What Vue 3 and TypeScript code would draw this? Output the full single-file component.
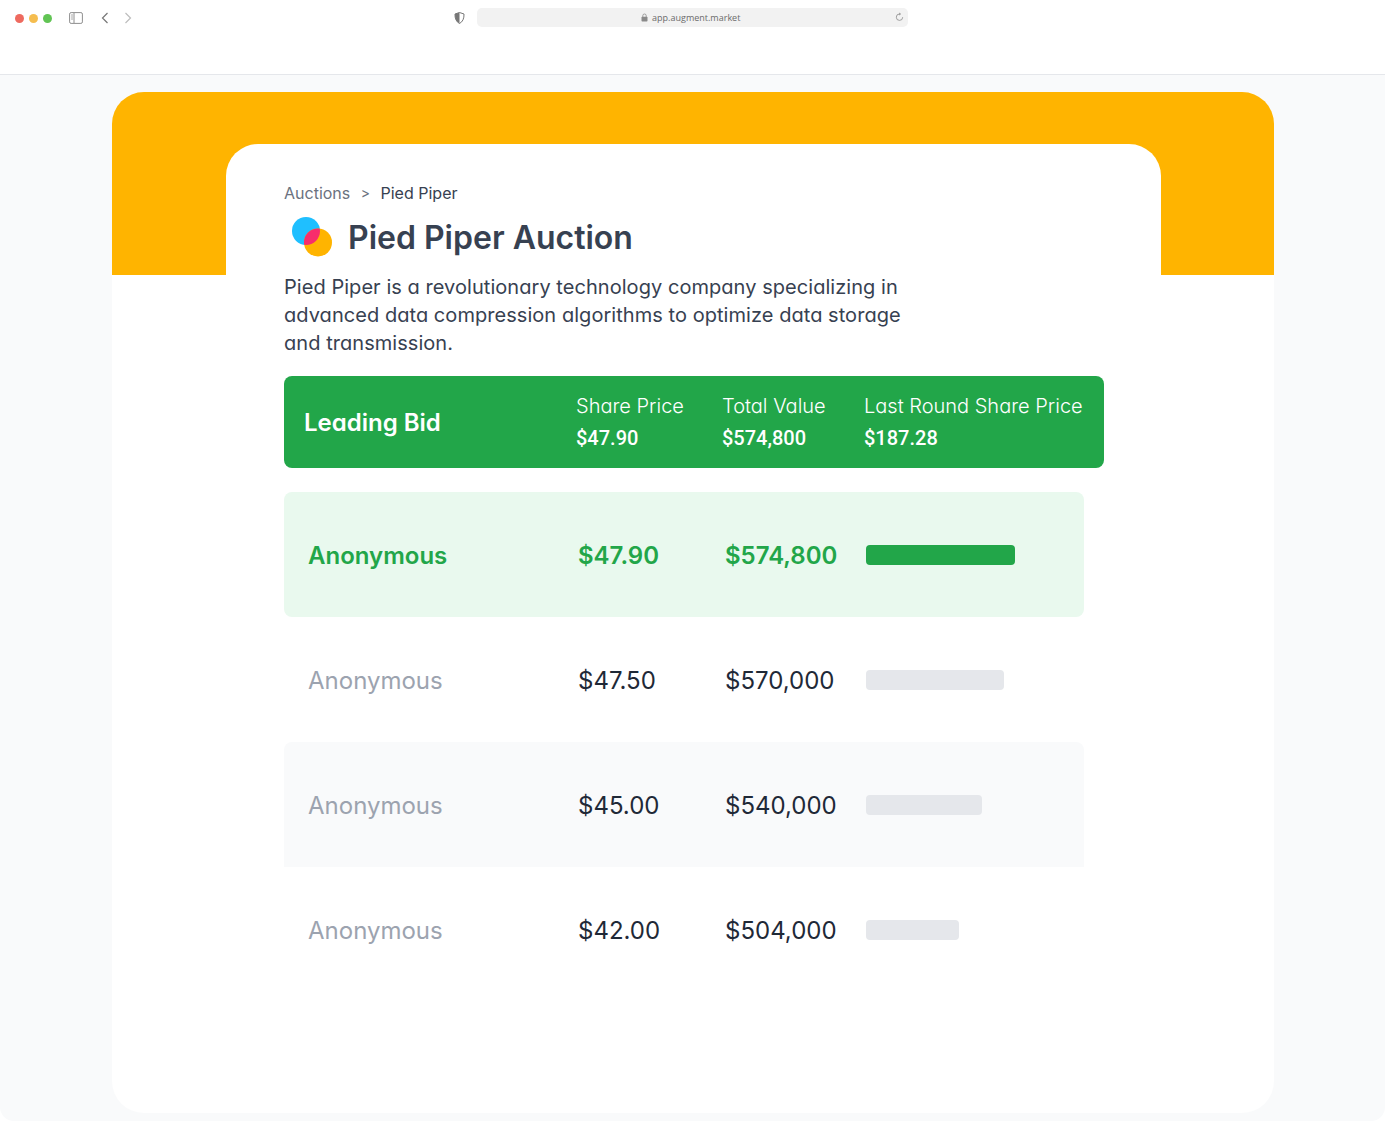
<template>
  <div class="window">
    <header class="chrome">
      <div class="chrome-left">
        <div class="lights">
          <span class="light red"></span>
          <span class="light yellow"></span>
          <span class="light green"></span>
        </div>
        <svg class="sidebar-icon" width="14" height="12" viewBox="0 0 14 12" fill="none">
          <rect x="0.6" y="0.6" width="12.8" height="10.8" rx="1.5" stroke="#8e8e8e" />
          <path d="M5 1v10" stroke="#8e8e8e" />
          <path d="M2 3h2M2 5h2M2 7h2" stroke="#a8a8a8" />
        </svg>
        <svg class="nav-back" width="8" height="12" viewBox="0 0 8 12" fill="none">
          <path d="M6.5 1 1.5 6l5 5" stroke="#777" stroke-width="1.2" />
        </svg>
        <svg class="nav-forward" width="8" height="12" viewBox="0 0 8 12" fill="none">
          <path d="M1.5 1l5 5-5 5" stroke="#bdbdbd" stroke-width="1.2" />
        </svg>
      </div>
      <svg class="shield" width="11" height="12" viewBox="0 0 11 12">
        <path d="M5.5.5 10 2c.2 4.500-1.300 7.800-4.500 9.500C2.300 9.800.8 6.500 1 2z" fill="#fff" stroke="#777" />
        <path d="M5.500.5 1 2c-.2 4.500 1.300 7.800 4.500 9.500z" fill="#777" />
      </svg>
      <div class="address">
        <svg width="7" height="9" viewBox="0 0 7 9" fill="none">
          <path d="M1.800 4V2.700a1.700 1.700 0 0 1 3.400 0V4" stroke="#8a8a8a" stroke-width=".8" />
          <rect x=".5" y="3.800" width="6" height="4.700" rx=".8" fill="#8a8a8a" />
        </svg>
        <span>app.augment.market</span>
        <svg class="reload" width="9" height="10" viewBox="0 0 9 10" fill="none">
          <path d="M4.500 2a3.200 3.200 0 1 0 3.200 3.200" stroke="#8a8a8a" stroke-width=".8" />
          <path d="M4.300.4 6 2 4.300 3.500z" fill="#8a8a8a" />
        </svg>
      </div>
    </header>

    <main class="stage">
      <section class="card">
        <div class="panel">
          <nav class="crumbs">
            <span class="crumb-root">Auctions</span>
            <span class="crumb-sep">&gt;</span>
            <span class="crumb-current">Pied Piper</span>
          </nav>
          <div class="title-row">
            <svg class="logo" width="40" height="40" viewBox="0 0 40 40">
              <defs>
                <clipPath id="blue-clip"><circle cx="14" cy="14" r="14" /></clipPath>
              </defs>
              <circle cx="14" cy="14" r="14" fill="#1fbfff" />
              <circle cx="26" cy="25.500" r="14" fill="#ffb400" />
              <circle cx="26" cy="25.500" r="14" fill="#f72d6c" clip-path="url(#blue-clip)" />
            </svg>
            <h1>Pied Piper Auction</h1>
          </div>
          <p class="intro">
            Pied Piper is a revolutionary technology company specializing in advanced data compression
            algorithms to optimize data storage and transmission.
          </p>

          <div class="leading">
            <h2>Leading Bid</h2>
            <div v-for="s in summary" :key="s.label" class="stat">
              <span class="stat-label">{{ s.label }}</span>
              <strong>{{ s.value }}</strong>
            </div>
          </div>

          <ul class="bids">
            <li v-for="(b, i) in bids" :key="b.total" class="bid" :class="{ top: i === 0, alt: i === 2 }">
              <span class="bidder">Anonymous</span>
              <span class="price">{{ b.price }}</span>
              <span class="total">{{ b.total }}</span>
              <span class="bar" :style="{ width: b.bar + 'px' }"></span>
            </li>
          </ul>
        </div>
      </section>
    </main>
  </div>
</template>

<script setup lang="ts">
const summary = [
  { label: 'Share Price', value: '$47.90' },
  { label: 'Total Value', value: '$574,800' },
  { label: 'Last Round Share Price', value: '$187.28' }
]

const bids = [
  { price: '$47.90', total: '$574,800', bar: 149 },
  { price: '$47.50', total: '$570,000', bar: 138 },
  { price: '$45.00', total: '$540,000', bar: 116 },
  { price: '$42.00', total: '$504,000', bar: 93 }
]
</script>

<style>
html,
body {
  margin: 0;
  background: #fff;
}
</style>

<style scoped>
.window {
  width: 1385px;
  height: 1121px;
  font-family: Inter, 'Liberation Sans', sans-serif;
  font-feature-settings: 'cv11' 1;
  color: #374151;
  overflow: hidden;
}

.chrome {
  height: 75px;
  box-sizing: border-box;
  border-bottom: 1px solid #e5e7eb;
  background: #fff;
  display: flex;
  align-items: flex-start;
  padding: 8px 477px 0 14.500px;
  position: relative;
}
.chrome-left {
  display: flex;
  align-items: center;
  height: 20px;
}
.lights {
  display: flex;
  gap: 5px;
}
.light {
  width: 9px;
  height: 9px;
  border-radius: 50%;
}
.red { background: #ee6a5f; }
.yellow { background: #f5bd4f; }
.green { background: #61c454; }
.sidebar-icon { margin-left: 17.500px; }
.nav-back { margin-left: 18px; }
.nav-forward { margin-left: 15px; }
.shield { margin-left: 321.500px; margin-top: 4px; }
.address {
  margin-left: 12px;
  flex: 1;
  height: 19px;
  box-sizing: border-box;
  padding-right: 3px;
  border-radius: 5px;
  background: #f2f2f2;
  display: flex;
  align-items: center;
  justify-content: center;
  gap: 4px;
  position: relative;
  font-family: 'Open Sans', sans-serif;
  font-size: 9px;
  color: #6b6b6b;
}
.reload {
  position: absolute;
  right: 4px;
  top: 4px;
}

.stage {
  height: 1046px;
  box-sizing: border-box;
  background: #f9fafb;
  border-radius: 0 0 14px 14px;
  padding: 17px 111px 0 112px;
}
.card {
  height: 1021px;
  box-sizing: border-box;
  border-radius: 32px;
  padding: 52px 113px 0 114px;
  background: linear-gradient(#ffb400 183px, #fff 183px);
}
.panel {
  background: #fff;
  border-radius: 32px 32px 0 0;
  padding: 37px 57px 0 58px;
}

.crumbs {
  display: flex;
  gap: 10.500px;
  font-size: 16px;
  line-height: 24px;
  color: #6b7280;
}
.crumb-sep { font-size: 14px; }
.crumb-current { color: #374151; }

.title-row {
  display: flex;
  align-items: center;
  gap: 16px;
  margin-top: 8px;
  height: 50px;
}
.logo {
  margin-left: 8px;
  margin-top: -2px;
}
h1 {
  margin: 0;
  font-size: 32px;
  line-height: 40px;
  font-weight: 600;
  color: #374151;
}
.intro {
  margin: 10px 0 0;
  width: 640px;
  font-size: 20px;
  line-height: 28px;
  letter-spacing: 0.05px;
  color: #374151;
}

.leading {
  margin-top: 19px;
  width: 820px;
  height: 92px;
  box-sizing: border-box;
  padding: 0 20px;
  border-radius: 8px;
  background: #22a649;
  color: #fff;
  display: grid;
  grid-template-columns: 272px 146px 142px 1fr;
  align-items: center;
}
h2 {
  margin: 0;
  font-size: 24px;
  font-weight: 600;
}
.stat {
  display: flex;
  flex-direction: column;
  gap: 8px;
  font-size: 20px;
  line-height: 24px;
  font-weight: 300;
  white-space: nowrap;
}
.stat strong {
  font-family: Roboto, sans-serif;
  font-weight: 500;
}

.bids {
  list-style: none;
  margin: 24px 0 0;
  padding: 0;
  width: 800px;
}
.bid {
  height: 125px;
  box-sizing: border-box;
  padding-left: 24px;
  display: grid;
  grid-template-columns: 270px 147px 141px 1fr;
  align-items: center;
  font-size: 24px;
  color: #1f2937;
  border-radius: 8px;
}
.bidder,
.price,
.total {
  padding-top: 2px;
}
.bidder { color: #9ca3af; }
.bar {
  height: 20px;
  border-radius: 4px;
  background: #e5e7eb;
}
.alt {
  background: #f9fafb;
  border-radius: 8px 8px 0 0;
}
.top {
  background: #e9f9ee;
  color: #22a649;
  font-weight: 600;
}
.top .bidder { color: #22a649; }
.top .bar { background: #22a649; }
</style>
